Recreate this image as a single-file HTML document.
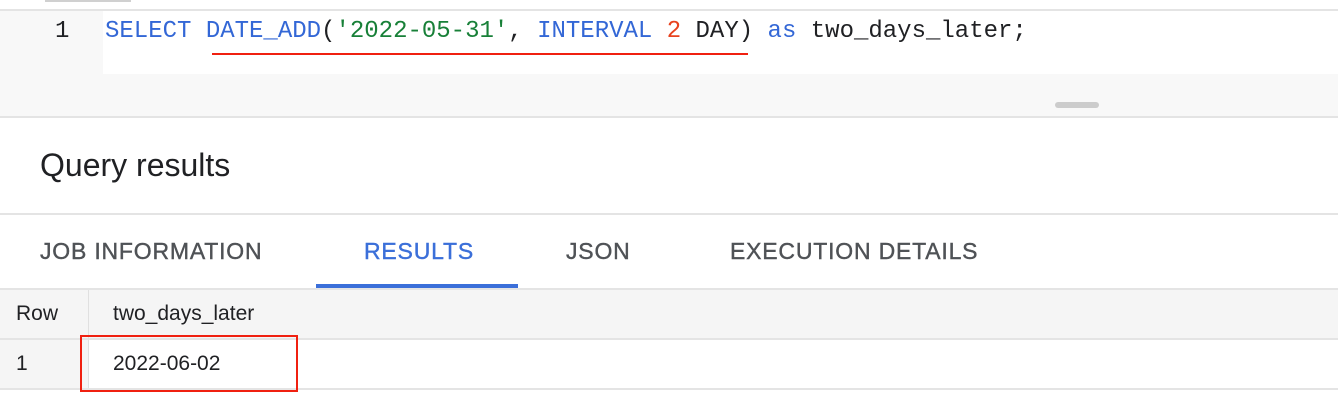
<!DOCTYPE html>
<html><head><style>
body{margin:0;width:1338px;height:402px;background:#fff;position:relative;overflow:hidden;font-family:"Liberation Sans",sans-serif}
.a{position:absolute}
.code{font-family:"Liberation Mono",monospace;font-size:24px;white-space:pre;line-height:30px}
.k{color:#3367d6}.s{color:#188038}.n{color:#e8431f}.d{color:#202124}
.tab{position:absolute;top:238px;font-size:23px;color:#4f5256;letter-spacing:0.8px;-webkit-text-stroke:0.4px #4f5256}
</style></head><body>
<div class="a" style="left:45px;top:0;width:86px;height:2px;background:#d0d0d0"></div>
<div class="a" style="left:0;top:9px;width:1338px;height:105px;background:#f8f8f8;border-top:2px solid #e4e4e4;border-bottom:2px solid #e4e4e4"></div>
<div class="a" style="left:103px;top:11px;width:1235px;height:63px;background:#fff"></div>
<div class="a code d" style="left:55px;top:17px">1</div>
<div class="a code" style="left:105px;top:17px"><span class="k">SELECT DATE_ADD</span><span class="d">(</span><span class="s">'2022-05-31'</span><span class="d">, </span><span class="k">INTERVAL</span> <span class="n">2</span><span class="d"> DAY) </span><span class="k">as</span><span class="d"> two_days_later;</span></div>
<div class="a" style="left:212px;top:53px;width:536px;height:2px;background:#f02010"></div>
<div class="a" style="left:1055px;top:102px;width:44px;height:6px;border-radius:3px;background:#ccc"></div>
<div class="a" style="left:40px;top:147px;font-size:32px;color:#202124">Query results</div>
<div class="a" style="left:0;top:213px;width:1338px;height:2px;background:#e4e4e4"></div>
<div class="tab" style="left:40px">JOB INFORMATION</div>
<div class="tab" style="left:364px;color:#3b6fd9;-webkit-text-stroke:0.4px #3b6fd9">RESULTS</div>
<div class="tab" style="left:566px">JSON</div>
<div class="tab" style="left:730px">EXECUTION DETAILS</div>
<div class="a" style="left:316px;top:284px;width:202px;height:4px;background:#3b6fd9"></div>
<div class="a" style="left:0;top:288px;width:1338px;height:2px;background:#e4e4e4"></div>
<div class="a" style="left:0;top:290px;width:1338px;height:48px;background:#f5f5f5"></div>
<div class="a" style="left:0;top:338px;width:1338px;height:2px;background:#e4e4e4"></div>
<div class="a" style="left:0;top:340px;width:88px;height:48px;background:#f5f5f5"></div>
<div class="a" style="left:88px;top:290px;width:1px;height:98px;background:#e0e0e0"></div>
<div class="a" style="left:0;top:388px;width:1338px;height:2px;background:#e4e4e4"></div>
<div class="a" style="left:16px;top:302px;font-size:21px;color:#202124">Row</div>
<div class="a" style="left:113px;top:302px;font-size:21px;color:#202124">two_days_later</div>
<div class="a" style="left:16px;top:352px;font-size:21px;color:#202124">1</div>
<div class="a" style="left:113px;top:352px;font-size:21px;color:#202124">2022-06-02</div>
<div class="a" style="left:80px;top:335px;width:214px;height:53px;border:2px solid #f02010"></div>
</body></html>
